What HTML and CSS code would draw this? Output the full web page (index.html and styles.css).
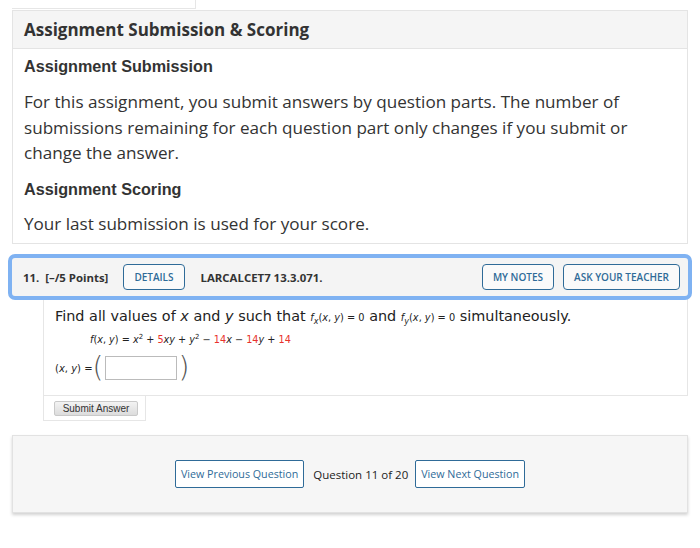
FILE: index.html
```html
<!DOCTYPE html>
<html>
<head>
<meta charset="utf-8">
<link rel="stylesheet" href="styles.css">
</head>
<body>
<div class="topfrag"></div>
<section class="card">
  <header class="card-head">Assignment Submission &amp; Scoring</header>
  <div class="card-body">
    <h3 class="sub">Assignment Submission</h3>
    <p class="para">For this assignment, you submit answers by question parts. The number of submissions remaining for each question part only changes if you submit or change the answer.</p>
    <h3 class="sub">Assignment Scoring</h3>
    <p class="para last">Your last submission is used for your score.</p>
  </div>
</section>

<div class="qhead">
  <span class="qnum">11.&nbsp; [–/5 Points]</span>
  <button class="obtn">DETAILS</button>
  <span class="qcode">LARCALCET7 13.3.071.</span>
  <span class="spacer"></span>
  <button class="obtn">MY NOTES</button>
  <button class="obtn">ASK YOUR TEACHER</button>
</div>

<div class="qbody">
  <div class="qcontent">
    <p class="prompt">Find all values of <i>x</i> and <i>y</i> such that <span class="m"><i>f</i><sub><i>x</i></sub>(<i>x</i>, <i>y</i>) = 0</span> and <span class="m"><i>f</i><sub><i>y</i></sub>(<i>x</i>, <i>y</i>) = 0</span> simultaneously.</p>
    <p class="formula"><i>f</i>(<i>x</i>, <i>y</i>) = <i>x</i><sup>2</sup> + <span class="r">5</span><i>xy</i> + <i>y</i><sup>2</sup> − <span class="r">14</span><i>x</i> − <span class="r">14</span><i>y</i> + <span class="r">14</span></p>
    <div class="answer">
      <span class="alabel">(<i>x</i>, <i>y</i>) =</span>
      <span class="paren">(</span>
      <span class="inbox"></span>
      <span class="paren">)</span>
    </div>
  </div>
  <div class="subtab"><button class="submit">Submit Answer</button></div>
</div>

<nav class="navcard">
  <button class="nbtn">View Previous Question</button>
  <span class="ncount">Question 11 of 20</span>
  <button class="nbtn">View Next Question</button>
</nav>
</body>
</html>
```
FILE: styles.css
```css
html, body { margin: 0; padding: 0; background: #fff; }
body { width: 700px; height: 548px; overflow: hidden; font-family: "Open Sans", sans-serif; color: #222; }

.topfrag { margin-left: 12px; width: 183px; height: 8px; border-right: 1px solid #e6e6e6; border-bottom: 1px solid #e6e6e6; }

.card { margin: 1px 12px 0; border: 1px solid #e4e4e4; }
.card-head { background: #f5f5f5; border-bottom: 1px solid #e4e4e4; height: 37px; line-height: 37px; padding-left: 11px; font-size: 17px; font-weight: 700; color: #333; }
.card-body { padding: 0 11px; }
.sub { margin: 0; padding-top: 7px; height: 26px; line-height: 20px; font-family: "Liberation Sans", Arial, sans-serif; font-size: 16.2px; font-weight: 700; color: #333; }
.para { margin: 0; padding: 7px 0 6px; font-size: 17.1px; line-height: 25.5px; color: #333; }
.para.last { padding: 6px 0 7px; }

.qhead { margin: 10px 8px 0; height: 38px; border: 4px solid #7fb2f2; border-radius: 7px; background: #f4f4f4; display: flex; align-items: center; padding: 0 8px 0 11px; position: relative; z-index: 1; }
.qnum { font-size: 11.4px; font-weight: 700; color: #333; margin-right: 15px; }
.qcode { font-size: 11.4px; font-weight: 700; color: #333; margin-left: 16px; }
.spacer { flex: 1; }
.obtn { font-family: "Open Sans", sans-serif; font-size: 10px; font-weight: 600; color: #2f6b98; background: #fafafa; border: 1.5px solid #2f6b98; border-radius: 4px; height: 26px; padding: 0 10px; margin-left: 9px; }
.obtn:first-of-type { margin-left: 0; }

.qbody { margin: -4px 12px 0 43px; }
.qcontent { border: 1px solid #e6e6e6; border-top: none; height: 88px; padding: 11px 0 0 11px; font-family: "DejaVu Sans", Verdana, sans-serif; color: #222; }
.prompt { margin: 0; font-size: 14.4px; line-height: 19px; }
.m { font-size: 9.8px; }
.m sub { font-size: 8px; }
.formula { margin: -2px 0 0 35px; font-size: 9.7px; line-height: 16px; }
.formula sup { font-size: 7px; }
.r { color: #e8322c; }
.answer { display: flex; align-items: center; margin-top: 5px; font-size: 10px; }
.alabel { margin-right: 0; }
.paren { font-size: 28px; font-weight: 200; line-height: 30px; color: #555; }
.inbox { width: 70px; height: 22px; border: 1px solid #bbb; background: #fff; margin: 0 2px 0 1px; }
.subtab { width: 103px; height: 26px; border: 1px solid #e6e6e6; border-top: none; margin-top: -1px; box-sizing: border-box; padding: 6px 0 0 10px; }
.submit { display: block; font-family: "Liberation Sans", Arial, sans-serif; font-size: 10px; color: #333; height: 15px; width: 84px; padding: 0; border: 1px solid #c9c9c9; border-radius: 2px; background: linear-gradient(#f3f3f3, #dcdcdc); }

.navcard { margin: 14px 12px 0; height: 76px; border: 1px solid #e2e2e2; background: #f6f6f6; box-shadow: 0 2px 3px rgba(0,0,0,0.18); display: flex; justify-content: center; align-items: center; gap: 0; }
.nbtn { font-family: "Open Sans", sans-serif; font-size: 10.7px; color: #2f6b98; background: #fff; border: 1.5px solid #2f6b98; border-radius: 2px; height: 28px; padding: 0 5px; }
.ncount { font-size: 11.5px; color: #222; margin: 0 7px 0 9px; }
```
